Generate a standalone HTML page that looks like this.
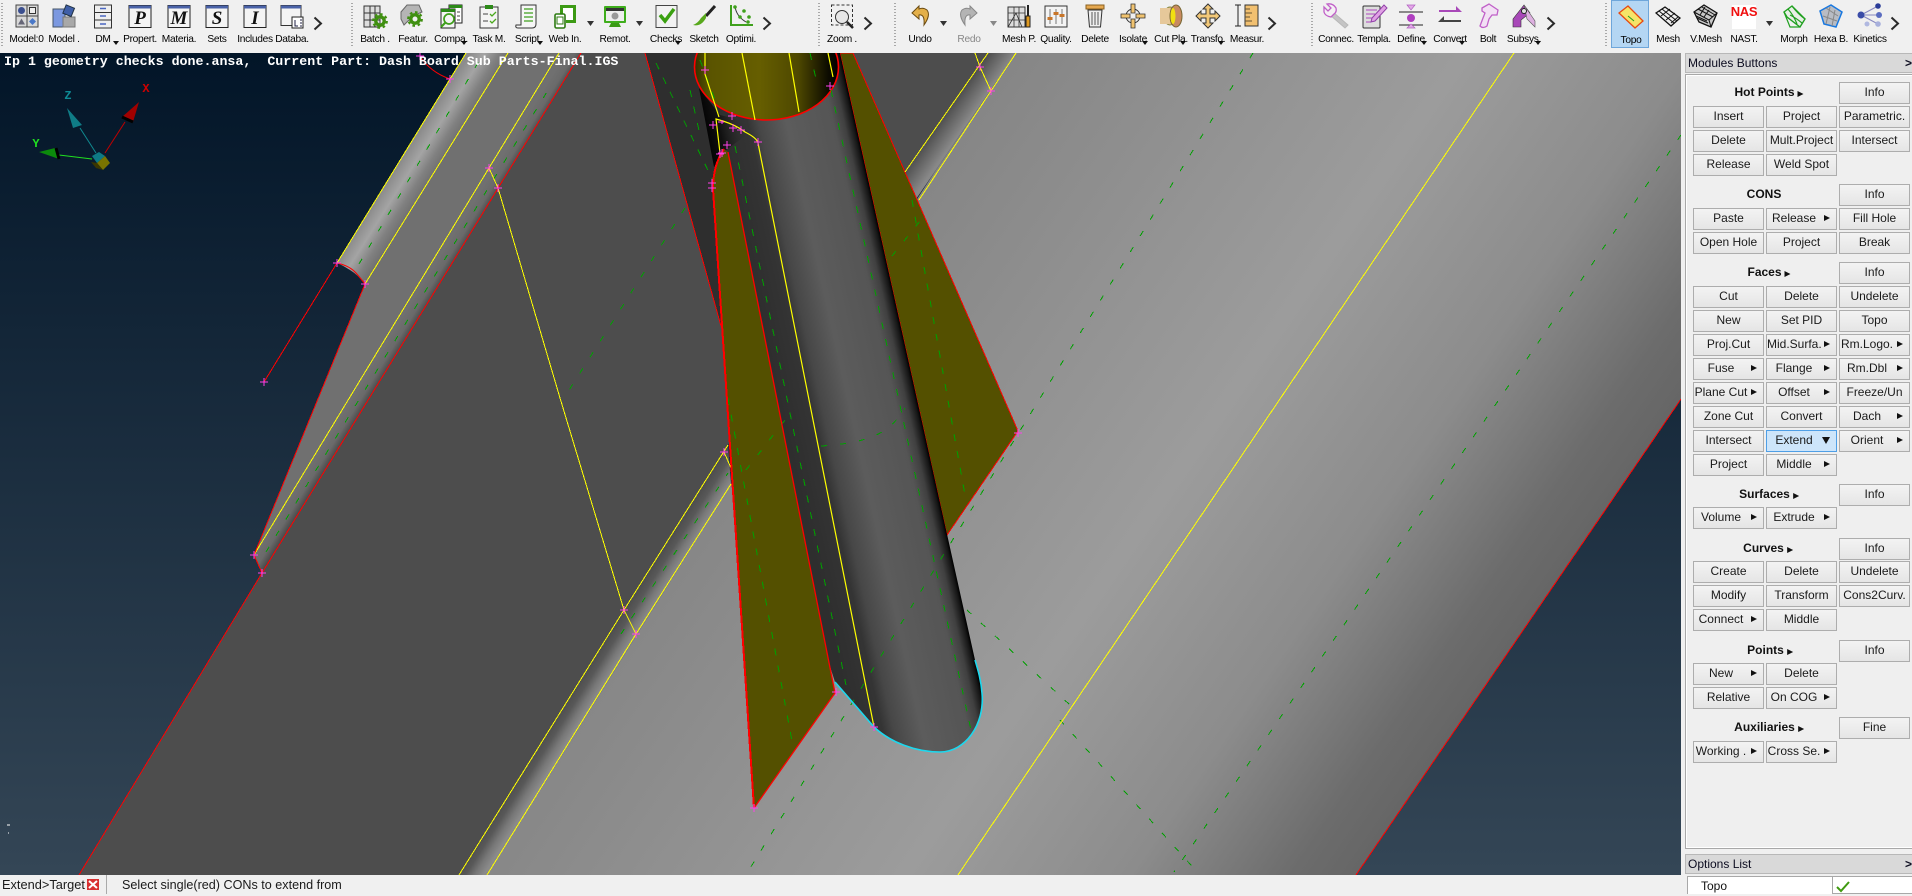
<!DOCTYPE html>
<html><head><meta charset="utf-8"><title>ANSA</title>
<style>
html,body{margin:0;padding:0;width:1912px;height:894px;overflow:hidden;background:#f0f0f0;font-family:"Liberation Sans",sans-serif}
#vp{position:absolute;left:0;top:0}
#tb{position:absolute;left:0;top:0}
.ov{position:absolute;left:4px;top:54px;font:bold 13.3px/16px "Liberation Mono",monospace;color:#fff;white-space:pre}
.fill{position:absolute;background:#f0f0f0}
.hd{position:absolute;left:1685px;width:227px;height:18px;background:#d9d9d9;border:1px solid #b8b8b8;border-right:0;font-size:12px;line-height:18px;color:#0c0c20;text-indent:2px;box-sizing:content-box}
.hd i{position:absolute;right:1px;top:0;font-style:normal;font-weight:bold;text-indent:0}
#body{position:absolute;left:1685px;top:74px;width:227px;height:773px;background:#efefef;border:1px solid #a8a8a8;border-right:0;box-shadow:inset 1px 1px 0 #fff,inset 0 -1px 0 #fff}
.b{position:absolute;width:71px;height:22px;box-sizing:border-box;border:1px solid #adadad;background:linear-gradient(#f3f3f3,#e5e5e5);font-size:12px;line-height:19px;text-align:center;color:#1a1a1a;white-space:nowrap;overflow:hidden}
.c1{left:1693px}.c2{left:1766px}.c3{left:1839px}
.a{padding-right:15px}
.a::after{content:"";position:absolute;right:6px;top:6px;border-left:6px solid #111;border-top:3.5px solid transparent;border-bottom:3.5px solid transparent}
.ext{background:#cde5fa;border-color:#4f9fe6}
.ext::after{right:6px;top:6px;border-left:4px solid transparent;border-right:4px solid transparent;border-top:7px solid #111;border-bottom:0}
.s{position:absolute;font-weight:bold;font-size:12px;line-height:21px;color:#111;white-space:nowrap;transform:translateX(-50%)}
.tr{display:inline-block;width:0;height:0;border-left:6px solid #111;border-top:3.5px solid transparent;border-bottom:3.5px solid transparent;margin-left:3px;vertical-align:-0.5px}
#st{position:absolute;left:0;top:875px;width:1681px;height:19px;background:#f0f0f0;color:#1a1a1a;white-space:nowrap}
#st span{position:absolute;top:0;line-height:20px}
#opt{position:absolute;left:1687px;top:876px;width:225px;height:18px;background:#fff;border:1px solid #a8a8a8;border-right:0;box-sizing:border-box}
</style></head><body>

<svg id="vp" width="1912" height="894" viewBox="0 0 1912 894" xmlns="http://www.w3.org/2000/svg">
<defs>
<linearGradient id="sky" gradientUnits="userSpaceOnUse" x1="0" y1="53" x2="0" y2="875"><stop offset="0" stop-color="#021528"/><stop offset="1" stop-color="#344656"/></linearGradient>
<linearGradient id="plate" gradientUnits="userSpaceOnUse" x1="1016" y1="53" x2="1630" y2="473"><stop offset="0" stop-color="#868686"/><stop offset=".5" stop-color="#9c9c9c"/><stop offset=".75" stop-color="#8c8c8c"/><stop offset=".93" stop-color="#6c6c6c"/><stop offset="1" stop-color="#666"/></linearGradient>
<linearGradient id="s1" gradientUnits="userSpaceOnUse" x1="337" y1="263" x2="367" y2="282"><stop offset="0" stop-color="#8c8c8c"/><stop offset=".35" stop-color="#a4a4a4"/><stop offset=".7" stop-color="#808080"/><stop offset="1" stop-color="#6e6e6e"/></linearGradient>
<linearGradient id="s3" gradientUnits="userSpaceOnUse" x1="254" y1="555" x2="268.5" y2="564"><stop offset="0" stop-color="#707070"/><stop offset=".5" stop-color="#6a6a6a"/><stop offset="1" stop-color="#444"/></linearGradient>
<linearGradient id="s4" gradientUnits="userSpaceOnUse" x1="988" y1="53" x2="1006.7" y2="66.3"><stop offset="0" stop-color="#4d4d4d"/><stop offset="1" stop-color="#888"/></linearGradient>
<linearGradient id="s5" gradientUnits="userSpaceOnUse" x1="560" y1="711" x2="579.4" y2="723.3"><stop offset="0" stop-color="#4d4d4d"/><stop offset=".35" stop-color="#585858"/><stop offset=".7" stop-color="#787878"/><stop offset="1" stop-color="#8a8a8a"/></linearGradient>
<linearGradient id="cyl" gradientUnits="userSpaceOnUse" x1="779" y1="400" x2="910.5" y2="370.8"><stop offset="0" stop-color="#2e2e2e"/><stop offset=".22" stop-color="#343434"/><stop offset=".3" stop-color="#474747"/><stop offset=".5" stop-color="#5c5c5c"/><stop offset=".84" stop-color="#555"/><stop offset=".92" stop-color="#404040"/><stop offset=".98" stop-color="#161616"/><stop offset="1" stop-color="#000"/></linearGradient>
<linearGradient id="hole" x1="0" y1="0" x2="1" y2="0"><stop offset="0" stop-color="#333000"/><stop offset=".1" stop-color="#5a5400"/><stop offset=".45" stop-color="#665e00"/><stop offset=".72" stop-color="#4e4800"/><stop offset=".93" stop-color="#0c0b00"/><stop offset="1" stop-color="#000"/></linearGradient>
<linearGradient id="wedge" gradientUnits="userSpaceOnUse" x1="702" y1="130" x2="745" y2="120"><stop offset="0" stop-color="#000"/><stop offset=".4" stop-color="#111"/><stop offset="1" stop-color="#333" stop-opacity="0"/></linearGradient>
</defs>
<rect x="0" y="53" width="1681" height="822" fill="url(#sky)"/>
<polygon points="262,573 498,188 581,53 1000,53 880,210 728,445 624,610 459,875 79,875" fill="#4d4d4d"/>
<polygon points="487,875 731,484 936,170 1016,53 1681,53 1681,399 1356,875" fill="url(#plate)"/>
<polygon points="988,53 1016,53 912,205 880,205" fill="url(#s4)"/>
<polygon points="459,875 728,445 731,484 487,875" fill="url(#s5)"/>
<path d="M420 56Q430 72 450 79L466 53H420Z" fill="#021528"/>
<path d="M337 263L450 79L466 53L508 53L365 284Q358 275 350 270T337 263Z" fill="url(#s1)"/>
<path d="M365 284L508 53L559 53L254 555Z" fill="#707070"/>
<polygon points="254,555 559,53 581,53 262,573" fill="url(#s3)"/>
<polygon points="840,53 853,53 1018,431 947,535" fill="#545000" stroke="#f00" stroke-width="1" shape-rendering="crispEdges"/>
<path d="M645 53L840 53L975 660C978 670 981 680 982 693C985 725 965 752 940 752C915 752 890 742 874 727L835 682L721 326Z" fill="url(#cyl)"/>
<polygon points="699,88 714,167 726,150 760,125 720,115" fill="url(#wedge)"/>
<ellipse cx="766.5" cy="67" rx="72" ry="53" fill="url(#hole)" stroke="#f00" stroke-width="1.6"/>
<path d="M724 149Q713 165 713 189L754 808L835 693L728 152Z" fill="#545000"/>

<g fill="none" stroke="#00a000" stroke-width="1" stroke-dasharray="6 13" shape-rendering="crispEdges">
<path d="M1253 53L749 870"/><path d="M1681 135L1174 872"/>
<path d="M967 610L1070 705"/><path d="M1060 720L1200 875"/>
<path d="M685 208L564 398"/><path d="M746 470L785 420"/><path d="M821 446Q855 444 874 436T905 408"/><path d="M892 256L920 221"/>
<path d="M621 634L728 473"/>
<path d="M359 264L479 61"/><path d="M266 552L553 82"/>
<path d="M656 63L717 189" stroke-dasharray="7 9"/>
</g>
<g fill="none" stroke="#00a000" stroke-width="1" stroke-dasharray="7 10" shape-rendering="crispEdges">
<path d="M735 146L846 685"/><path d="M831 90L971 730"/><path d="M728 398L792 741"/><path d="M912 200L965 495"/>
<path d="M700 60L717 105"/><path d="M810 53L817 83"/><path d="M690 90L700 135"/>
</g>

<g fill="none" stroke="#ff0" stroke-width="1" shape-rendering="crispEdges">
<path d="M337 263L466 53"/><path d="M365 284L508 53"/><path d="M254 555L489 168L559 53"/>
<path d="M489 168L498 188L560 398L624 610L636 634"/>
<path d="M459 875L624 610L728 445"/><path d="M487 875L636 634L731 484"/><path d="M724 452L731 468"/>
<path d="M988 53L905 172"/><path d="M1016 53L919 200"/><path d="M975 53L980 67L991 91"/>
<path d="M1514 53L958 875"/>
</g>
<g fill="none" stroke="#ff0" stroke-width="1.2">
<path d="M705 53L705 74L719 117"/><path d="M742 53L755 120"/><path d="M789 53L799 112"/><path d="M828 53L833 77"/>
<path d="M720 153L716 119Q735 124 745 132Q757 138 758 143L874 727"/>
</g>
<g fill="none" stroke="#f00" stroke-width="1" shape-rendering="crispEdges">
<path d="M337 263L264 382"/><path d="M365 284L254 555L262 573L79 875"/><path d="M262 573L581 53"/>
<path d="M645 53L721 326"/><path d="M1356 875L1681 399"/>
</g>
<path d="M337 263Q350 266 356 273T365 284M420 56Q430 72 450 79" fill="none" stroke="#f00" stroke-width="1"/>
<g fill="none" stroke="#f00" stroke-width="2" shape-rendering="crispEdges"><path d="M724 149Q713 165 713 189L754 808"/></g>
<g fill="none" stroke="#f00" stroke-width="1.3"><path d="M754 808L835 693L728 152"/></g>
<path d="M835 682L874 727C890 742 915 752 940 752C965 752 985 725 982 693C981 680 978 670 975 660" fill="none" stroke="#1cd8ee" stroke-width="1.6"/>
<path d="M333 263h8M337 259v8M361 284h8M365 280v8M250 555h8M254 551v8M258 573h8M262 569v8M260 382h8M264 378v8M416 56h8M420 53v7M446 79h8M450 75v8M485 168h8M489 164v8M494 188h8M498 184v8M620 610h8M624 606v8M632 634h8M636 630v8M720 452h8M724 448v8M976 67h8M980 63v8M987 91h8M991 87v8M1014 433h8M1018 429v8M832 692h8M836 688v8M750 808h8M754 804v8M870 727h8M874 723v8M701 70h8M705 66v8M826 86h8M830 82v8M728 116h8M732 112v8M709 125h8M713 121v8M718 122h6M722 120v4M729 128h8M733 124v8M737 130h8M741 126v8M754 142h8M758 138v8M723 145h8M727 141v8M718 153h8M722 149v8M716 154h8M720 150v8M708 183h8M712 179v8M708 188h8M712 184v8" fill="none" stroke="#ff40e8" stroke-width="1" shape-rendering="crispEdges"/>

<!-- triad -->
<path d="M105 153L125 122" stroke="#c00000" fill="none"/>
<polygon points="139,102 122,117 133,122" fill="#a00000"/><path d="M122 117L133 122" stroke="#000" stroke-width="3"/>
<path d="M96 153L80 128" stroke="#108a90" fill="none"/>
<polygon points="67,108 73,128 82,125" fill="#0f7c86"/>
<path d="M92 159L59 155" stroke="#20e020" fill="none"/>
<polygon points="39,152 55,148 59,159" fill="#0c8a0c"/><path d="M56 148L59 159" stroke="#000" stroke-width="3"/>
<polygon points="92,156 99,152 105,156 97,163" fill="#0e7a84"/>
<polygon points="97,163 105,156 110,163 103,170" fill="#7a7400"/>
<polygon points="91,162 97,163 103,170 96,168" fill="#3a3600"/>
<text x="146" y="92" font-family="Liberation Mono,monospace" font-weight="bold" font-size="12" fill="#d00000" text-anchor="middle">X</text>
<text x="68" y="99" font-family="Liberation Mono,monospace" font-weight="bold" font-size="12" fill="#0e8a94" text-anchor="middle">Z</text>
<text x="36" y="147" font-family="Liberation Mono,monospace" font-weight="bold" font-size="12" fill="#20e020" text-anchor="middle">Y</text>
<path d="M7 825h3M8 833h1" stroke="#fff" stroke-width="1" shape-rendering="crispEdges"/>
</svg>

<div class="ov">Ip 1 geometry checks done.ansa,  Current Part: Dash Board Sub Parts-Final.IGS</div>

<svg id="tb" width="1912" height="53" viewBox="0 0 1912 53" xmlns="http://www.w3.org/2000/svg">
<defs>
<g id="gear"><circle r="4.2" fill="none" stroke="#3f8f10" stroke-width="3.4"/><circle r="6.8" fill="none" stroke="#3f8f10" stroke-width="2.2" stroke-dasharray="2.6 2.7"/></g>
<path id="chev" d="M-3.5-6.5L3-0.5L-3.5 5.5" fill="none" stroke="#2a2a2a" stroke-width="2"/>
</defs>
<rect width="1912" height="53" fill="#f0f0f0"/>
<rect x="1611.5" y="0.5" width="37" height="47" fill="#b4d6f3" stroke="#6ea6da"/>
<g stroke="#a8a8a8" stroke-width="2" stroke-dasharray="1 2"><path d="M2 3V46M352 3V46M819 3V46M895 3V46M1312 3V46M1606 3V46"/></g>
<use href="#chev" x="318" y="24"/><use href="#chev" x="767" y="24"/><use href="#chev" x="868" y="24"/><use href="#chev" x="1272" y="24"/><use href="#chev" x="1551" y="24"/><use href="#chev" x="1895" y="24"/>
<path d="M587 21h7l-3.500 5zM636 21h7l-3.500 5zM940 21h7l-3.500 5zM1766 21h7l-3.500 5z" fill="#333"/><path d="M990 21h7l-3.500 5z" fill="#888"/>
<path d="M113 41h6l-3 4zM461 41h6l-3 4zM537 41h6l-3 4zM675 41h6l-3 4zM1142 41h6l-3 4zM1180 41h6l-3 4zM1218 41h6l-3 4zM1421 41h6l-3 4zM1459 41h6l-3 4zM1535 41h6l-3 4z" fill="#111"/>

<!-- icons -->
<g transform="translate(27,16)"><rect x="-11" y="-11" width="22" height="22" fill="#d8d8d8" stroke="#444"/><path d="M0-11V11M-11 0H11" stroke="#444"/><circle cx="-5.500" cy="-5.500" r="3.500" fill="#3b4f8f"/><rect x="2.500" y="-8.500" width="6" height="6" fill="#eee" stroke="#333"/><path d="M-5.500 2.500l3.500 6h-7z" fill="#667"/><path d="M5.500 2l3.500 3.500-3.500 3.500-3.500-3.500z" fill="#4a78c8"/></g>
<g transform="translate(64,16)"><rect x="-11" y="-7" width="12" height="18" fill="#7b98e0" stroke="#456"/><rect x="-1" y="1" width="12" height="10" fill="#a8a8a8" stroke="#777"/><rect x="0" y="-10" width="9" height="9" transform="rotate(22 4 -5)" fill="#3f5fa8" stroke="#234"/></g>
<g transform="translate(103,16)"><rect x="-8.500" y="-11" width="17" height="23" fill="#eee" stroke="#333"/><path d="M-8.500-3.500H8.500M-8.500 4H8.500" stroke="#333"/><path d="M-3-7.500H3M-3 0H3M-3 8H3" stroke="#4a66c0" stroke-width="1.500"/></g>
<g font-family="Liberation Serif,serif" font-weight="bold" font-style="italic" font-size="19" text-anchor="middle" fill="#111">
<g transform="translate(140,16)"><rect x="-11" y="-10.500" width="22" height="22" fill="#f4f4f4" stroke="#222"/><rect x="-11" y="-10.500" width="22" height="3" fill="#4a62a8"/><text y="8">P</text></g>
<g transform="translate(179,16)"><rect x="-11" y="-10.500" width="22" height="22" fill="#f4f4f4" stroke="#222"/><rect x="-11" y="-10.500" width="22" height="3" fill="#4a62a8"/><text y="8">M</text></g>
<g transform="translate(217,16)"><rect x="-11" y="-10.500" width="22" height="22" fill="#f4f4f4" stroke="#222"/><rect x="-11" y="-10.500" width="22" height="3" fill="#4a62a8"/><text y="8">S</text></g>
<g transform="translate(255,16)"><rect x="-11" y="-10.500" width="22" height="22" fill="#f4f4f4" stroke="#222"/><rect x="-11" y="-10.500" width="22" height="3" fill="#4a62a8"/><text y="8">I</text></g>
</g>
<g transform="translate(292,16)"><rect x="-11" y="-10.500" width="20" height="20" fill="#f4f4f4" stroke="#333"/><rect x="-11" y="-10.500" width="20" height="3" fill="#4a62a8"/><rect x="0" y="1" width="11" height="11" fill="#fff" stroke="#222"/><path d="M3 4v6h3M8 4h2M8 7h2M8 10h2" stroke="#224" fill="none"/></g>
<g transform="translate(375,16)"><rect x="-11" y="-10" width="16" height="21" fill="#ddd" stroke="#333"/><path d="M-11-3H5M-11 4H5M-5-10V11M0-10V11" stroke="#333"/><use href="#gear" x="5" y="5"/></g>
<g transform="translate(413,16)"><path d="M-12-4L-6-11H6L9-4L0 0L-9 9L-12 3Z" fill="#b5b5b5" stroke="#666"/><use href="#gear" x="2" y="3"/></g>
<g transform="translate(451,16)"><rect x="-2" y="-11" width="13" height="18" fill="#fff" stroke="#222"/><rect x="-2" y="-11" width="13" height="3" fill="#2c8a18"/><rect x="-10" y="-7" width="14" height="19" fill="#f4f4f4" stroke="#222"/><rect x="-10" y="-7" width="14" height="3" fill="#2c8a18"/><path d="M6-4H9M6 0H9M6 4H9" stroke="#444"/><circle cx="-2" cy="3" r="5" fill="none" stroke="#3f9f1c" stroke-width="1.700"/><path d="M-6 7l-4 4" stroke="#3f9f1c" stroke-width="2.200"/></g>
<g transform="translate(489,16)"><rect x="-9" y="-9" width="18" height="21" fill="#f4f4f4" stroke="#333"/><rect x="-4" y="-11" width="8" height="4" fill="#2c8a18"/><path d="M-6-2H-1M-6 5H-1" stroke="#444"/><path d="M1-2l2 2 4-4M1 5l2 2 4-4" fill="none" stroke="#4aa81c" stroke-width="1.300"/></g>
<g transform="translate(527,16)"><path d="M-6-11H9V8Q9 12 5 12H-9Q-12 12-11 9H-6Z" fill="#f6f6f6" stroke="#333"/><path d="M-3-7H6M-3-3H6M-3 1H6M-3 5H6" stroke="#3f9f1c" stroke-width="1.300"/></g>
<g transform="translate(565,16)"><path d="M-5-11H11V7H1V2H-5Z" fill="#3c9a14"/><rect x="-2" y="-8" width="10" height="12" fill="#fff"/><rect x="-10" y="-2" width="10" height="14" rx="1.500" fill="#fff" stroke="#2c7a10" stroke-width="1.600"/><rect x="-8" y="1" width="6" height="7" fill="none" stroke="#2c7a10"/></g>
<g transform="translate(615,16)"><rect x="-11" y="-10" width="22" height="17" rx="1" fill="#3fae1c"/><rect x="-9" y="-8" width="18" height="13" fill="#eee"/><rect x="-9" y="-8" width="18" height="3" fill="#333"/><circle cy="0" r="3.500" fill="#999"/><path d="M-4 7h8l2 4h-12z" fill="#3a9a14"/></g>
<g transform="translate(666,16)"><rect x="-10" y="-10.500" width="21" height="22" fill="#f2f2f2" stroke="#444"/><path d="M-6-1L-1 5L8-7" fill="none" stroke="#3aa010" stroke-width="3.500"/></g>
<g transform="translate(704,16)"><path d="M11-10L2 0" stroke="#222" stroke-width="3"/><path d="M2-3L-3 2Q-6 7-11 9Q-3 11 2 2Z" fill="#58a81c"/></g>
<g transform="translate(741,16)"><path d="M-10-11V9H12" fill="none" stroke="#3fa01c" stroke-width="2"/><path d="M-6-10Q-5 0 5 6" fill="none" stroke="#333"/><circle cx="-6" cy="-9" r="1.800" fill="#3fa01c"/><circle cx="3" cy="-5" r="1.800" fill="#3fa01c"/><circle cx="8" cy="1" r="1.800" fill="#3fa01c"/><circle cx="-1" cy="1" r="1.800" fill="#3fa01c"/><circle cx="7" cy="6" r="1.800" fill="#3fa01c"/></g>
<g transform="translate(842,16)"><rect x="-10.500" y="-11" width="21" height="20" fill="none" stroke="#333" stroke-dasharray="3 2"/><circle cy="1" cx="0" r="6.500" fill="#e6e6e6" stroke="#333"/><path d="M5 6l6 6" stroke="#222" stroke-width="2.500"/></g>
<g transform="translate(920,16)"><path d="M-1-10L-8-3L-1 3V-1Q5-2 4 9Q11-1 7-6Q3-9-1-7Z" fill="#e4b04a" stroke="#6a4a10"/></g>
<g transform="translate(969,16)"><path d="M1-10L8-3L1 3V-1Q-5-2-4 9Q-11-1-7-6Q-3-9 1-7Z" fill="#b4b4b4" stroke="#888"/></g>
<g transform="translate(1019,16)"><rect x="-11" y="-9" width="17" height="20" fill="#ddd" stroke="#333"/><path d="M-11-3H6M-11 4H6M-5-9V11M0-9V11M-11 11L-3-3L3 11" stroke="#333" fill="none" stroke-width=".8"/><path d="M9-11V0" stroke="#222" stroke-width="2"/><rect x="7" y="0" width="4" height="11" fill="#e09a20" stroke="#222"/></g>
<g transform="translate(1056,16)"><rect x="-11" y="-10" width="22" height="21" fill="#f4f4f4" stroke="#333"/><path d="M-6-7V8M0-7V8M6-7V8" stroke="#777"/><rect x="-8.500" y="1" width="5" height="3" fill="#c8762a"/><rect x="-2.500" y="-4" width="5" height="3" fill="#c8762a"/><rect x="3.500" y="-2" width="5" height="3" fill="#c8762a"/></g>
<g transform="translate(1095,16)"><rect x="-9" y="-11" width="18" height="4" fill="#e5a850" stroke="#8a6020"/><path d="M-7-6H7L5.500 11H-5.500Z" fill="#eee" stroke="#333"/><path d="M-3-4V9M0-4V9M3-4V9" stroke="#555"/></g>
<g transform="translate(1133,16)"><circle r="7" fill="none" stroke="#333"/><path d="M-2-12H2V-3H-2ZM-2 3H2V12H-2ZM-12-2H-3V2H-12ZM3-2H12V2H3Z" fill="#f2c470" stroke="#333" stroke-width=".8"/></g>
<g transform="translate(1171,16)"><ellipse cx="-1" cy="0" rx="6" ry="9" fill="#d8b484" stroke="#884"/><rect x="-11" y="-8" width="10" height="16" fill="#e6c89a"/><ellipse cx="5" cy="0" rx="6" ry="11" fill="#c88a60" stroke="#763"/><ellipse cx="2" cy="0" rx="2.500" ry="8" fill="#f2e010"/></g>
<g transform="translate(1208,16)"><path d="M0-12L5-7H2V-2H7V-5L12 0L7 5V2H2V7H5L0 12L-5 7H-2V2H-7V5L-12 0L-7-5V-2H-2V-7H-5Z" fill="#f2c878" stroke="#333"/></g>
<g transform="translate(1247,16)"><path d="M-9-11V10M-12-11H-6M-12 10H-6" stroke="#222" fill="none"/><rect x="-2" y="-11" width="13" height="21" fill="#f2c070" stroke="#333"/><path d="M-2-7H3M-2-3H5M-2 1H3M-2 5H5" stroke="#653"/></g>
<g transform="translate(1336,16)"><path d="M-3-4L-6-1L9 12L12 9Z" fill="#c4c4c4" stroke="#b8b8b8"/><path d="M-12-9L-8-5L-5-8L-9-12Q-3-13 0-8Q1-4-2-2L-5 1Q-11 0-12-4Z" fill="#f4f0f4" stroke="#c060c8" stroke-width="1.300"/></g>
<g transform="translate(1374,16)"><rect x="-11" y="-10" width="17" height="22" rx="1" fill="#ddd" stroke="#333"/><path d="M-8-6H3M-8-2H1M-8 2H-1M-8 6H-3" stroke="#b048c0"/><path d="M10-11L13-8L1 5L-3 6L-2 2Z" fill="#e0a0e4" stroke="#9040a8"/></g>
<g transform="translate(1411,16)"><path d="M-12-4H12M-12 9H12" stroke="#222"/><path d="M-4-11H4L0-6ZM-4 12H4L0 8Z" fill="#e4a8e8" stroke="#b060c0" stroke-width=".7"/><circle cy="2" r="4" fill="#b040c0"/></g>
<g transform="translate(1450,16)"><path d="M-11-6H6V-10L12-4H-11Z" fill="#a848b8"/><path d="M11 4H-6V0L-12 6H11Z" fill="#444"/></g>
<g transform="translate(1488,16)"><path d="M-6-8L1-12L10-6L9-1L4-1L1 3L-1 10Q-5 13-8 10L-5 2L-3-3L-6-5Z" fill="#f2e0f4" stroke="#c060c8" stroke-width="1.300"/></g>
<g transform="translate(1524,16)"><path d="M-11 11V3L0-11L6-3L-3 4L-3 11Z" fill="#a848b8" stroke="#333" stroke-width=".6"/><path d="M0-11L11 5V11L3 3Z" fill="#ddb0e0" stroke="#555" stroke-width=".6"/><circle cx="0" cy="-5" r="2.500" fill="#e0e0e0" stroke="#222"/></g>
<g transform="translate(1631,17)"><path d="M-12-4L-3-11L12 4L4 11Z" fill="#f6e468" stroke="#e84a10" stroke-width="1.300"/><path d="M-3-1L3 4" stroke="#20a020"/></g>
<g transform="translate(1668,16)"><path d="M-12-3L-3-9L12 2L3 10Z" fill="#eee" stroke="#111" stroke-width="1.300"/><path d="M-9-5L6 7M-6-7L9 5M-7 0L2-7M-2 4L7-3M3 7L10 1" stroke="#111" fill="none"/></g>
<g transform="translate(1706,16)"><path d="M-12-4L-2-11L11-3L5 11L-7 6Z" fill="#c8c8c8" stroke="#111" stroke-width="1.300"/><path d="M-12-4L3 4L5 11M3 4L11-3M-8-7L7 1M-4-9L9-1M-6-1L-1-9M-2 1L3-6M-9 2L2 7M-10 0L1 5" stroke="#111" fill="none" stroke-width="1"/></g>
<g transform="translate(1744,16)"><rect x="-12" y="-11" width="24" height="24" fill="#fff"/><text y="0" text-anchor="middle" font-family="Liberation Sans,sans-serif" font-weight="bold" font-size="13" letter-spacing="-.3" fill="#f01010">NAS</text></g>
<g transform="translate(1794,16)"><path d="M-10-4L-2-10L11 3L6 11L-7 1Z" fill="#d8f0d0" fill-opacity=".3" stroke="#20a020" stroke-width="1.400"/><path d="M-10-4Q-6 6 -4 11L6 11M-2-10Q4-2 11 3M-6-7Q0 0 3 8M-4-1Q2 2 8 7" fill="none" stroke="#20a020" stroke-width="1.200"/></g>
<g transform="translate(1831,16)"><path d="M-11-5L0-11L11-4L5 11L-7 8Z" fill="#b8bcc4" stroke="#1878e0" stroke-width="1.500"/><path d="M-5-8L7 0M-1-9L-5 8M-8 0L6 5M4-6L1 10" stroke="#888" fill="none"/></g>
<g transform="translate(1870,16)"><path d="M-9-1L8-10M-9-1L8-1M-9-1L8 8" stroke="#8888c0" fill="none"/><circle cx="-9" cy="-1" r="3.500" fill="#3a4ca8"/><circle cx="8" cy="-10" r="2.800" fill="#2a3c98"/><circle cx="9" cy="-1" r="3" fill="#5a6cc0"/><circle cx="-3" cy="8" r="2.500" fill="#b0b8e0"/><circle cx="8" cy="8" r="2.800" fill="#a8b0dc"/></g>

<!-- labels -->
<g font-family="Liberation Sans,sans-serif" font-size="10.200" letter-spacing="-.3" text-anchor="middle" fill="#000">
<text x="26.500" y="42">Model:0</text><text x="64" y="42">Model .</text><text x="103" y="42">DM</text><text x="140" y="42">Propert.</text><text x="179" y="42">Materia.</text><text x="217" y="42">Sets</text><text x="255" y="42">Includes</text><text x="292" y="42">Databa.</text>
<text x="375" y="42">Batch .</text><text x="413" y="42">Featur.</text><text x="451" y="42">Compa.</text><text x="489" y="42">Task M.</text><text x="527" y="42">Script</text><text x="565" y="42">Web In.</text><text x="615" y="42">Remot.</text>
<text x="666" y="42">Checks</text><text x="704" y="42">Sketch</text><text x="741" y="42">Optimi.</text><text x="842" y="42">Zoom .</text>
<text x="920" y="42">Undo</text><text x="969" y="42" fill="#888">Redo</text><text x="1019" y="42">Mesh P.</text><text x="1056" y="42">Quality.</text><text x="1095" y="42">Delete</text><text x="1133" y="42">Isolate</text><text x="1171" y="42">Cut Pla.</text><text x="1208" y="42">Transfo.</text><text x="1247" y="42">Measur.</text>
<text x="1336" y="42">Connec.</text><text x="1374" y="42">Templa.</text><text x="1411" y="42">Define</text><text x="1450" y="42">Convert</text><text x="1488" y="42">Bolt</text><text x="1524" y="42">Subsys.</text>
<text x="1631" y="43">Topo</text><text x="1668" y="42">Mesh</text><text x="1706" y="42">V.Mesh</text><text x="1744" y="42">NAST.</text><text x="1794" y="42">Morph</text><text x="1831" y="42">Hexa B.</text><text x="1870" y="42">Kinetics</text>
</g>
</svg>

<div class="fill" style="left:1681px;top:53px;width:231px;height:841px"></div>
<div class="hd" style="top:53px">Modules Buttons<i>&gt;</i></div>
<div id="body"></div>
<div class="hd" style="top:854px">Options List<i>&gt;</i></div>
<div id="opt"></div>
<div style="position:absolute;left:1688px;top:877px;width:144px;height:17px;background:#fff;border-right:1px solid #a8a8a8;font-size:12px;line-height:19px;color:#111;text-indent:13px">Topo</div>
<svg style="position:absolute;left:1836px;top:881px" width="15" height="12"><path d="M1 6L5 10L13 1" fill="none" stroke="#3f9a10" stroke-width="2"/></svg>

<div class="s" style="left:1769px;top:82px">Hot Points<span class="tr"></span></div>
<div class="b c3" style="top:82px">Info</div>
<div class="b c1" style="top:106px">Insert</div><div class="b c2" style="top:106px">Project</div><div class="b c3" style="top:106px">Parametric.</div>
<div class="b c1" style="top:130px">Delete</div><div class="b c2" style="top:130px">Mult.Project</div><div class="b c3" style="top:130px">Intersect</div>
<div class="b c1" style="top:154px">Release</div><div class="b c2" style="top:154px">Weld Spot</div>

<div class="s" style="left:1764px;top:184px">CONS</div>
<div class="b c3" style="top:184px">Info</div>
<div class="b c1" style="top:208px">Paste</div><div class="b c2 a" style="top:208px">Release</div><div class="b c3" style="top:208px">Fill Hole</div>
<div class="b c1" style="top:232px">Open Hole</div><div class="b c2" style="top:232px">Project</div><div class="b c3" style="top:232px">Break</div>

<div class="s" style="left:1769px;top:262px">Faces<span class="tr"></span></div>
<div class="b c3" style="top:262px">Info</div>
<div class="b c1" style="top:286px">Cut</div><div class="b c2" style="top:286px">Delete</div><div class="b c3" style="top:286px">Undelete</div>
<div class="b c1" style="top:310px">New</div><div class="b c2" style="top:310px">Set PID</div><div class="b c3" style="top:310px">Topo</div>
<div class="b c1" style="top:334px">Proj.Cut</div><div class="b c2 a" style="top:334px">Mid.Surfa.</div><div class="b c3 a" style="top:334px">Rm.Logo.</div>
<div class="b c1 a" style="top:358px">Fuse</div><div class="b c2 a" style="top:358px">Flange</div><div class="b c3 a" style="top:358px">Rm.Dbl</div>
<div class="b c1 a" style="top:382px">Plane Cut</div><div class="b c2 a" style="top:382px">Offset</div><div class="b c3" style="top:382px">Freeze/Un</div>
<div class="b c1" style="top:406px">Zone Cut</div><div class="b c2" style="top:406px">Convert</div><div class="b c3 a" style="top:406px">Dach</div>
<div class="b c1" style="top:430px">Intersect</div><div class="b c2 a ext" style="top:430px">Extend</div><div class="b c3 a" style="top:430px">Orient</div>
<div class="b c1" style="top:454px">Project</div><div class="b c2 a" style="top:454px">Middle</div>

<div class="s" style="left:1769px;top:484px">Surfaces<span class="tr"></span></div>
<div class="b c3" style="top:484px">Info</div>
<div class="b c1 a" style="top:507px">Volume</div><div class="b c2 a" style="top:507px">Extrude</div>

<div class="s" style="left:1768px;top:538px">Curves<span class="tr"></span></div>
<div class="b c3" style="top:538px">Info</div>
<div class="b c1" style="top:561px">Create</div><div class="b c2" style="top:561px">Delete</div><div class="b c3" style="top:561px">Undelete</div>
<div class="b c1" style="top:585px">Modify</div><div class="b c2" style="top:585px">Transform</div><div class="b c3" style="top:585px">Cons2Curv.</div>
<div class="b c1 a" style="top:609px">Connect</div><div class="b c2" style="top:609px">Middle</div>

<div class="s" style="left:1770px;top:640px">Points<span class="tr"></span></div>
<div class="b c3" style="top:640px">Info</div>
<div class="b c1 a" style="top:663px">New</div><div class="b c2" style="top:663px">Delete</div>
<div class="b c1" style="top:687px">Relative</div><div class="b c2 a" style="top:687px">On COG</div>

<div class="s" style="left:1769px;top:717px">Auxiliaries<span class="tr"></span></div>
<div class="b c3" style="top:717px">Fine</div>
<div class="b c1 a" style="top:741px">Working .</div><div class="b c2 a" style="top:741px">Cross Se.</div>

<div id="st">
<span style="left:2px;font-size:12.800px">Extend&gt;Target</span>
<svg style="position:absolute;left:87px;top:4px" width="12" height="11"><rect width="12" height="11" fill="#d83030"/><path d="M2 2L10 9M10 2L2 9" stroke="#fff" stroke-width="2"/></svg>
<div style="position:absolute;left:106px;top:0;width:1px;height:19px;background:#aaa"></div>
<span style="left:122px;font-size:12.600px">Select single(red) CONs to extend from</span>
</div>
</body></html>
